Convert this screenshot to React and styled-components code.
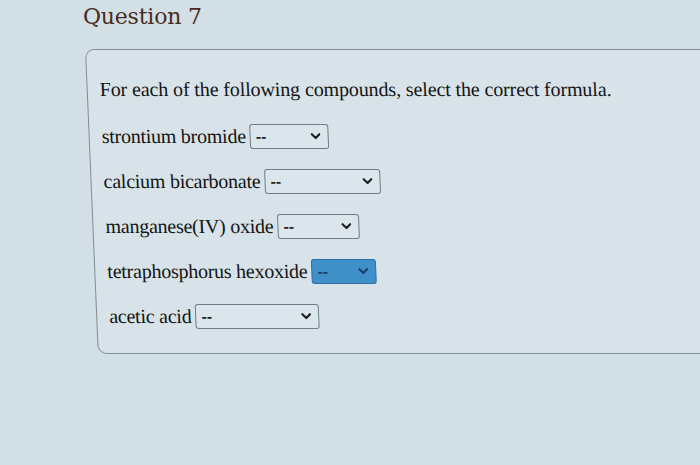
import React from 'react'
import styled, { createGlobalStyle } from 'styled-components'

const GlobalStyle = createGlobalStyle`
  html, body {
    margin: 0;
    padding: 0;
    background: #d2dfe5;
    overflow: hidden;
  }
  body {
    font-family: "Liberation Serif", "Times New Roman", serif;
    color: #141414;
  }
`

const Page = styled.div`
  width: 700px;
  height: 465px;
  padding: 2px 0 0 83px;
  box-sizing: border-box;
  overflow: hidden;
`

const Title = styled.h2`
  margin: 0;
  font-family: "DejaVu Serif", "Liberation Serif", serif;
  font-weight: normal;
  font-size: 22px;
  line-height: 30px;
  color: #4a2b22;
  letter-spacing: -0.2px;
`

const Card = styled.div`
  margin: 17px 0 0 2px;
  width: 700px;
  height: 305px;
  box-sizing: border-box;
  border: 1.5px solid #7f8d94;
  border-radius: 9px;
  background: #d7e3e8;
  padding: 26px 0 0 12px;
  transform: skewX(2.4deg);
  transform-origin: top left;
  display: flex;
  flex-direction: column;
  align-items: flex-start;
  gap: 20px;
`

const Prompt = styled.p`
  margin: 0 0 2px;
  font-size: 20px;
  line-height: 26px;
  letter-spacing: -0.12px;
`

const Row = styled.div`
  display: flex;
  align-items: center;
  gap: 4px;
  font-size: 20px;
  line-height: 25px;
  letter-spacing: -0.25px;
`

const Select = styled.div`
  width: ${p => p.$width}px;
  height: 25px;
  box-sizing: border-box;
  display: flex;
  align-items: center;
  justify-content: space-between;
  padding: 0 7px 0 5px;
  border: 1px solid ${p => (p.$active ? '#2e6f9f' : '#6f7d84')};
  border-radius: 3px;
  background: ${p => (p.$active ? '#3f8fc9' : '#dae6eb')};
  color: ${p => (p.$active ? '#1d3f66' : '#222')};
  font-family: "Liberation Sans", Arial, sans-serif;
  font-size: 16px;
  font-weight: bold;
  letter-spacing: 0;

  svg {
    display: block;
  }
`

const Chevron = () => (
  <svg width="10" height="7" viewBox="0 0 10 7">
    <polyline points="1.2,1.2 5,5 8.8,1.2" fill="none" stroke="currentColor" strokeWidth="2.2" strokeLinecap="round" strokeLinejoin="round" />
  </svg>
)

const compounds = [
  { name: 'strontium bromide', width: 79 },
  { name: 'calcium bicarbonate', width: 116 },
  { name: 'manganese(IV) oxide', width: 82 },
  { name: 'tetraphosphorus hexoxide', width: 65, active: true },
  { name: 'acetic acid', width: 124 },
]

export default function App() {
  return (
    <>
      <GlobalStyle />
      <Page>
        <Title>Question 7</Title>
        <Card>
          <Prompt>For each of the following compounds, select the correct formula.</Prompt>
          {compounds.map(c => (
            <Row key={c.name}>
              <span>{c.name}</span>
              <Select $width={c.width} $active={c.active}>
                <span>--</span>
                <Chevron />
              </Select>
            </Row>
          ))}
        </Card>
      </Page>
    </>
  )
}
